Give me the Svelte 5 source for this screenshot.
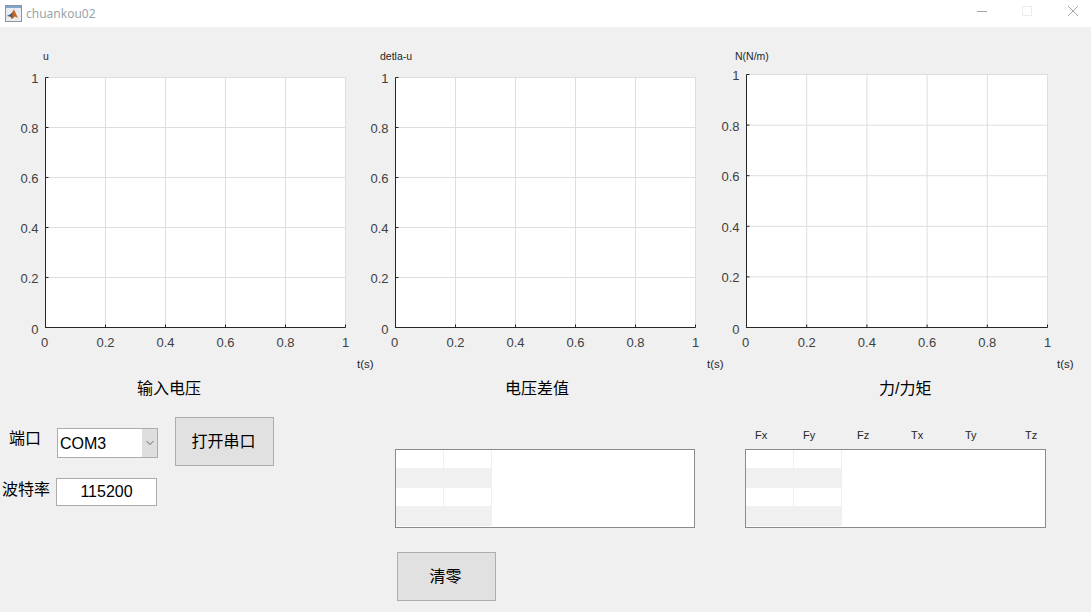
<script>
	const ticks = [0, 0.2, 0.4, 0.6, 0.8, 1];

	// one entry per axes, coordinates are inside the column's svg
	const plots = [
		{ name: 'u', nameX: 43, width: 350, left: 45.5, right: 345.5, top: 37.5, bottom: 287.5, unitX: 357, title: '输入电压' },
		{ name: 'detla-u', nameX: 30, width: 350, left: 45.5, right: 345.5, top: 37.5, bottom: 287.5, unitX: 357, title: '电压差值' },
		{ name: 'N(N/m)', nameX: 35, width: 391, left: 46.5, right: 347.5, top: 34.5, bottom: 287.5, unitX: 357, title: '力/力矩' }
	];

	const columns = ['Fx', 'Fy', 'Fz', 'Tx', 'Ty', 'Tz'];
	const rows = [0, 1, 2, 3];

	const xAt = (p, t) => p.left + (p.right - p.left) * t;
	const yAt = (p, t) => p.bottom - (p.bottom - p.top) * t;
</script>

<div class="window">
	<header class="titlebar">
		<svg class="app-icon" width="18" height="18" viewBox="0 0 18 18">
			<rect x="0.5" y="0.5" width="16" height="16" fill="#e8edf2" stroke="#8f9499" />
			<rect x="1" y="1" width="15" height="2" fill="#7fa6d0" />
			<path d="M2 11 L6 9 L9 4.5 L13 13 L10 11.5 L7 14 L5.5 11.5 Z" fill="#c8641e" />
			<path d="M2 11 L6 9 L7.5 7 L7 14 L5.5 11.5 Z" fill="#2f5f9e" />
		</svg>
		<span class="app-name">chuankou02</span>
		<div class="win-buttons">
			<svg width="114" height="12" viewBox="0 0 114 12">
				<path d="M0 5.5 H10" stroke="#a4a4a8" fill="none" />
				<rect x="45.5" y="0.5" width="9" height="9" stroke="#ececec" fill="none" />
				<path d="M91 0 L101 10 M101 0 L91 10" stroke="#a4a4a8" fill="none" />
			</svg>
		</div>
	</header>

	<section class="plots">
		{#each plots as p}
			<svg class="axes" width={p.width} height="332">
				<rect x={p.left} y={p.top} width={p.right - p.left} height={p.bottom - p.top} fill="#fff" stroke="#dedede" />
				{#each ticks as t}
					<path d="M{xAt(p, t)} {p.top} V{p.bottom}" stroke="#dedede" />
					<path d="M{p.left} {yAt(p, t)} H{p.right}" stroke="#dedede" />
					<path d="M{xAt(p, t)} {p.bottom} v-3" stroke="#262626" />
					<path d="M{p.left} {yAt(p, t)} h3" stroke="#262626" />
					<text class="tick" x={xAt(p, t) - (t === 0 ? 1 : 0)} y="307" text-anchor="middle">{t}</text>
					<text class="tick" x={p.left - 7} y={yAt(p, t) + (t === 0 ? 6.5 : 5.5)} text-anchor="end">{t}</text>
				{/each}
				<path d="M{p.left} {p.top} V{p.bottom} H{p.right}" stroke="#262626" fill="none" />
				<text class="small" x={p.nameX} y="20">{p.name}</text>
				<text class="small unit" x={p.unitX} y="328">t(s)</text>
			</svg>
		{/each}
	</section>

	<section class="titles">
		{#each plots as p}
			<div>{p.title}</div>
		{/each}
	</section>

	<section class="controls">
		<div class="port">
			<div class="fields">
				<div class="field port-row">
					<span class="label">端口</span>
					<div class="combo">
						<span>COM3</span>
						<div class="arrow">
							<svg width="8" height="6" viewBox="0 0 8 6">
								<path d="M0.5 1 L4 4.5 L7.5 1" stroke="#666" fill="none" />
							</svg>
						</div>
					</div>
				</div>
				<div class="field baud-row">
					<span class="label">波特率</span>
					<div class="edit">115200</div>
				</div>
			</div>
			<button class="open">打开串口</button>
		</div>

		<div class="middle">
			<div class="table">
				{#each rows as r}
					<div class="row" class:odd={r % 2 === 1}><i></i><i></i></div>
				{/each}
			</div>
			<button class="clear">清零</button>
		</div>

		<div class="force">
			<div class="heads">
				{#each columns as c}
					<span>{c}</span>
				{/each}
			</div>
			<div class="table wide">
				{#each rows as r}
					<div class="row" class:odd={r % 2 === 1}><i></i><i></i></div>
				{/each}
			</div>
		</div>
	</section>
</div>

<style>
	:global(body) {
		background: #f0f0f0;
	}

	.window {
		width: 1091px;
		height: 612px;
		overflow: hidden;
		background: #f0f0f0;
		font-family: "Liberation Sans", "Noto Sans CJK SC", sans-serif;
		color: #000;
	}

	.titlebar {
		display: flex;
		align-items: center;
		height: 27px;
		padding-left: 5px;
		background: #fff;
	}

	.app-icon {
		flex: none;
	}

	.app-name {
		margin-left: 3px;
		font-family: "Noto Sans", sans-serif;
		font-size: 12px;
		color: #9aa3aa;
	}

	.win-buttons {
		display: flex;
		margin-left: auto;
		margin-top: -3px;
	}

	.plots {
		display: flex;
		padding-top: 13px;
	}

	.axes {
		display: block;
		flex: none;
		overflow: visible;
	}

	.tick {
		font-size: 13px;
		fill: #404040;
	}

	.small {
		font-size: 10.5px;
		fill: #262626;
	}

	.unit {
		font-size: 11.5px;
	}

	.titles {
		display: flex;
		height: 45px;
		padding-top: 5px;
		box-sizing: border-box;
		font-size: 16px;
		line-height: 24px;
	}

	.titles div {
		flex: none;
		width: 350px;
		box-sizing: border-box;
	}

	.titles div:nth-child(1) {
		padding-left: 137px;
	}

	.titles div:nth-child(2) {
		padding-left: 155px;
	}

	.titles div:nth-child(3) {
		padding-left: 179px;
	}

	.controls {
		display: flex;
	}

	.port {
		display: flex;
		flex: none;
		width: 350px;
		box-sizing: border-box;
		padding-left: 2px;
		align-items: flex-start;
	}

	.fields {
		display: flex;
		flex-direction: column;
		width: 173px;
		padding-top: 11px;
		gap: 20px;
	}

	.field {
		display: flex;
		font-size: 16px;
	}

	.label {
		line-height: 20px;
		white-space: nowrap;
	}

	.port-row {
		padding-left: 7px;
	}

	.port-row .label {
		width: 48px;
		margin-top: 1px;
	}

	.baud-row .label {
		width: 54px;
		margin-top: 2px;
	}

	.combo {
		display: flex;
		justify-content: space-between;
		width: 101px;
		height: 30px;
		box-sizing: border-box;
		border: 1px solid #acacac;
		background: #fff;
		line-height: 30px;
		padding-left: 2px;
	}

	.arrow {
		display: flex;
		align-items: center;
		justify-content: center;
		width: 15px;
		background: #dedede;
	}

	.edit {
		width: 101px;
		height: 28px;
		box-sizing: border-box;
		border: 1px solid #acacac;
		background: #fff;
		text-align: center;
		line-height: 26px;
	}

	button {
		display: block;
		width: 99px;
		height: 49px;
		padding: 0 2px 4px 0;
		border: 1px solid #adadad;
		background: #e1e1e1;
		font: inherit;
		font-size: 16px;
		color: #000;
	}

	.middle {
		flex: none;
		width: 350px;
		box-sizing: border-box;
		padding: 32px 0 0 45px;
	}

	.table {
		width: 300px;
		height: 79px;
		box-sizing: border-box;
		border: 1px solid #8a8a90;
		background: #fff;
	}

	.table.wide {
		width: 301px;
	}

	.row {
		display: flex;
		width: 96px;
		height: 18px;
	}

	.row i {
		display: block;
		width: 47px;
		border-right: 1px solid #f0f0f0;
	}

	.row.odd {
		height: 20px;
		background: #f0f0f0;
	}

	.clear {
		margin: 24px 0 0 2px;
	}

	.force {
		flex: none;
		width: 391px;
		box-sizing: border-box;
		padding: 11px 0 0 45px;
	}

	.heads {
		height: 21px;
		display: grid;
		grid-template-columns: 48px 54px 54px 54px 60px 30px;
		padding-left: 10px;
		font-size: 11px;
		line-height: 14px;
		color: #262626;
	}
</style>
